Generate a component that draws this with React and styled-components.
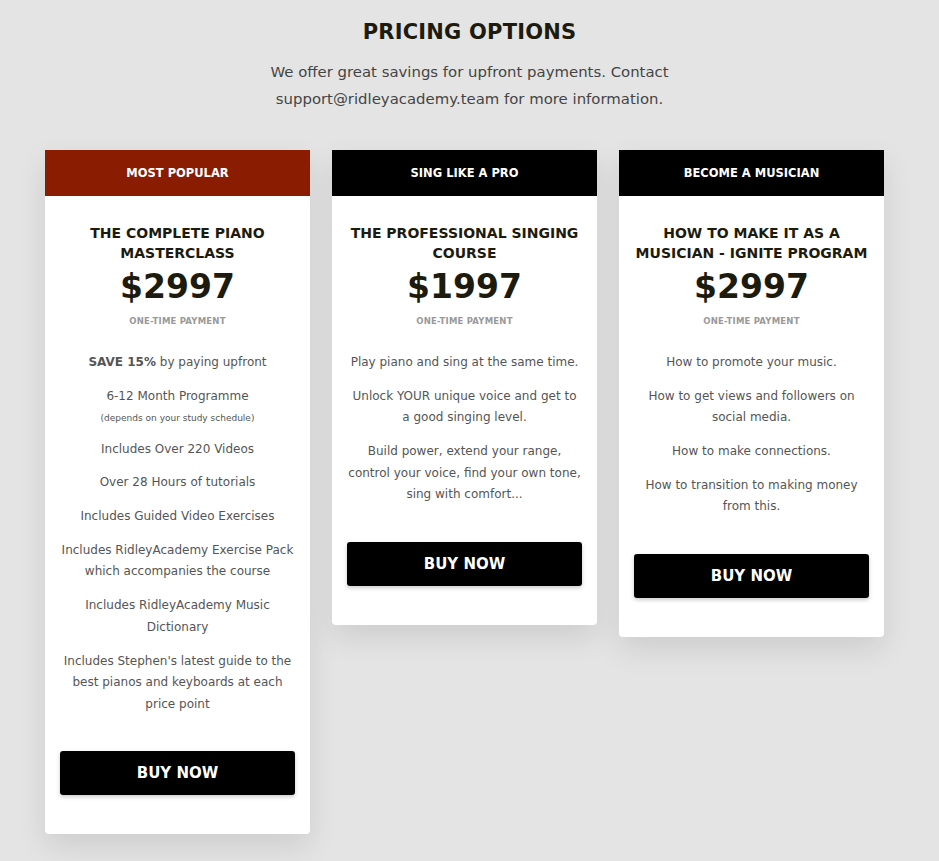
import React from "react";
import styled, { createGlobalStyle } from "styled-components";

const GlobalStyle = createGlobalStyle`
  body {
    margin: 0;
    background: #e4e4e4;
    font-family: "DejaVu Sans", "Open Sans", sans-serif;
  }
`;

const plans = [
  {
    tag: "MOST POPULAR",
    tagColor: "#8a1c02",
    title: "THE COMPLETE PIANO MASTERCLASS",
    price: "$2997",
    features: [
      { bold: "SAVE 15%", text: " by paying upfront" },
      { text: "6-12 Month Programme", note: "(depends on your study schedule)" },
      { text: "Includes Over 220 Videos" },
      { text: "Over 28 Hours of tutorials" },
      { text: "Includes Guided Video Exercises" },
      { text: "Includes RidleyAcademy Exercise Pack which accompanies the course" },
      { text: "Includes RidleyAcademy Music Dictionary" },
      { text: "Includes Stephen's latest guide to the best pianos and keyboards at each price point" },
    ],
  },
  {
    tag: "SING LIKE A PRO",
    tagColor: "#000",
    title: "THE PROFESSIONAL SINGING COURSE",
    price: "$1997",
    features: [
      { text: "Play piano and sing at the same time." },
      { text: "Unlock YOUR unique voice and get to a good singing level." },
      { text: "Build power, extend your range, control your voice, find your own tone, sing with comfort..." },
    ],
  },
  {
    tag: "BECOME A MUSICIAN",
    tagColor: "#000",
    title: "HOW TO MAKE IT AS A MUSICIAN - IGNITE PROGRAM",
    price: "$2997",
    features: [
      { text: "How to promote your music." },
      { text: "How to get views and followers on social media." },
      { text: "How to make connections." },
      { text: "How to transition to making money from this." },
    ],
  },
];

function App() {
  return (
    <Page>
      <GlobalStyle />
      <Heading>PRICING OPTIONS</Heading>
      <Intro>
        We offer great savings for upfront payments. Contact
        <br />
        support@ridleyacademy.team for more information.
      </Intro>
      <Cards>
        {plans.map((plan) => (
          <Card key={plan.tag}>
            <Tag $bg={plan.tagColor}>{plan.tag}</Tag>
            <CardBody>
              <Title>{plan.title}</Title>
              <Price>{plan.price}</Price>
              <PayNote>ONE-TIME PAYMENT</PayNote>
              <Features>
                {plan.features.map((f, i) => (
                  <Feature key={i}>
                    {f.bold && <strong>{f.bold}</strong>}
                    {f.text}
                    {f.note && <Note>{f.note}</Note>}
                  </Feature>
                ))}
              </Features>
              <BuyButton>BUY NOW</BuyButton>
            </CardBody>
          </Card>
        ))}
      </Cards>
    </Page>
  );
}

const Page = styled.div`
  padding: 18px 0 40px;
  display: flex;
  flex-direction: column;
  align-items: center;
`;

const Heading = styled.h2`
  margin: 0;
  font-size: 21px;
  line-height: 28px;
  font-weight: 700;
  color: #1d1a0e;
  letter-spacing: 0.2px;
`;

const Intro = styled.p`
  margin: 13px 0 0;
  text-align: center;
  font-size: 14.9px;
  line-height: 27px;
  color: #444;
`;

const Cards = styled.div`
  margin-top: 37px;
  display: flex;
  align-items: flex-start;
  gap: 22px;
  margin-right: 10px;
`;

const Card = styled.div`
  width: 265px;
  background: #fff;
  border-radius: 0 0 4px 4px;
  box-shadow: 0 12px 30px rgba(0, 0, 0, 0.1);
`;

const Tag = styled.div`
  height: 46px;
  display: flex;
  align-items: center;
  justify-content: center;
  background: ${(p) => p.$bg};
  color: #fff;
  font-size: 11.5px;
  font-weight: 700;
`;

const CardBody = styled.div`
  padding: 27px 15px 39px;
  display: flex;
  flex-direction: column;
  align-items: center;
  text-align: center;
`;

const Title = styled.h3`
  margin: 0;
  font-size: 14px;
  line-height: 20px;
  font-weight: 700;
  color: #1d1a0e;
`;

const Price = styled.div`
  margin-top: 2px;
  font-size: 33px;
  line-height: 44px;
  font-weight: 700;
  color: #1d1a0e;
`;

const PayNote = styled.div`
  margin-top: 7px;
  font-size: 8.5px;
  font-weight: 700;
  color: #999;
  letter-spacing: 0.2px;
`;

const Features = styled.div`
  margin-top: 26px;
  display: flex;
  flex-direction: column;
  gap: 12.3px;
`;

const Feature = styled.p`
  margin: 0;
  font-size: 12px;
  line-height: 21.5px;
  color: #555;

  strong {
    font-weight: 700;
  }
`;

const Note = styled.span`
  display: block;
  margin-top: 3px;
  font-size: 9px;
  line-height: 16px;
`;

const BuyButton = styled.button`
  margin-top: 36px;
  width: 100%;
  height: 44px;
  border: none;
  border-radius: 3px;
  background: #000;
  color: #fff;
  font-family: inherit;
  font-size: 15px;
  font-weight: 700;
  box-shadow: 0 2px 4px rgba(0, 0, 0, 0.2);
  cursor: pointer;
`;

export default App;
